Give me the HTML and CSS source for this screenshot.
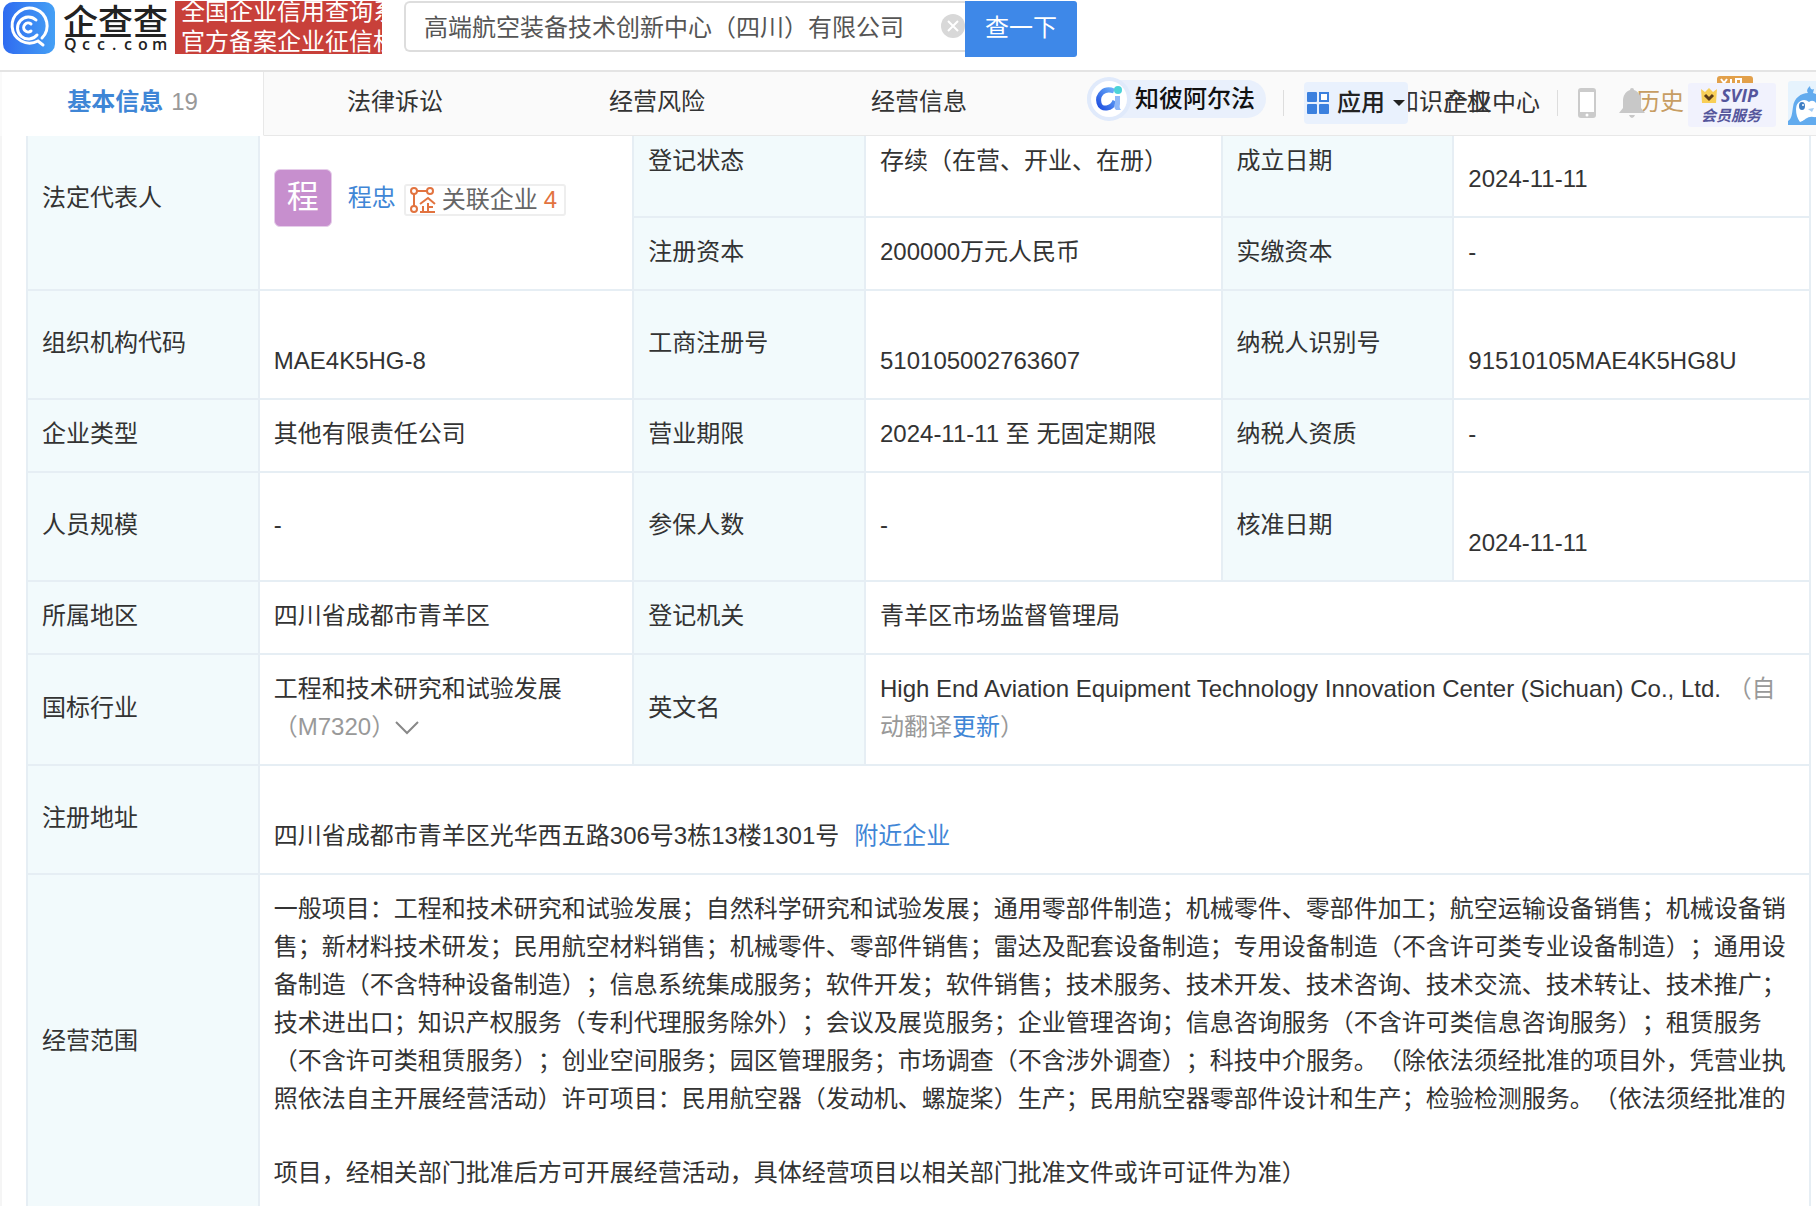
FILE: index.html
```html
<!DOCTYPE html>
<html lang="zh-CN">
<head>
    <meta charset="utf-8">
    <title>高端航空装备技术创新中心（四川）有限公司 - 企查查</title>
    <link rel="stylesheet" href="styles.css">
</head>
<body>
    <header class="header">
        <a class="logo" href="#" aria-label="企查查">
            <svg class="logo-mark" viewBox="0 0 52 52">
                <defs>
                    <linearGradient id="logoBg" x1="0" y1="0" x2="1" y2="0">
                        <stop offset="0" stop-color="#2f6bf0"/>
                        <stop offset="1" stop-color="#45a0f5"/>
                    </linearGradient>
                </defs>
                <rect width="52" height="52" rx="10" fill="url(#logoBg)"/>
                <g fill="none" stroke="#fff" stroke-width="3" stroke-linecap="round">
                    <path d="M40 43L35 39A17.500 17.500 0 1 1 39 36"/>
                    <path d="M34 33A11 11 0 1 1 33 18"/>
                    <path d="M28 29A4.500 4.500 0 1 1 28 22"/>
                </g>
            </svg>
            <svg class="logo-text" viewBox="0 0 106 52">
                <text class="logo-cn" x="0" y="33">企查查</text>
                <text class="logo-en" x="1 19 34 49 61 75 89" y="48">Qcc.com</text>
            </svg>
        </a>
        <div class="slogan">
            <p>全国企业信用查询系统</p>
            <p>官方备案企业征信机构</p>
        </div>
        <form class="search">
            <div class="search-box">
                <input class="search-input" type="text" aria-label="企业名称" value="高端航空装备技术创新中心（四川）有限公司">
                <button class="search-clear" type="button" aria-label="清空">
                    <svg viewBox="0 0 24 24">
                        <circle cx="12" cy="12" r="12" fill="#d8d8d8"/>
                        <path d="M7 7L17 17M17 7L7 17" stroke="#fff" stroke-width="2"/>
                    </svg>
                </button>
            </div>
            <button class="search-btn" type="button">查一下</button>
        </form>
    </header>

    <nav class="nav">
        <a class="tab active" href="#">基本信息<span class="count">19</span></a>
        <a class="tab" href="#">法律诉讼</a>
        <a class="tab" href="#">经营风险</a>
        <a class="tab" href="#">经营信息</a>
        <span class="tab"></span>
        <a class="tab" href="#">知识产权</a>
        <a class="tab history" href="#">历史</a>

        <!-- floats over the tabs -->
        <div class="tools">
            <a class="alpha" href="#">
                <svg viewBox="0 0 44 44">
                    <defs>
                        <linearGradient id="alphaBg" x1="1" y1="0" x2="0" y2="1">
                            <stop offset="0" stop-color="#6fb2fa"/>
                            <stop offset="1" stop-color="#1f4fe0"/>
                        </linearGradient>
                    </defs>
                    <circle cx="22" cy="22" r="22" fill="#e0eafb"/>
                    <circle cx="22" cy="22" r="18" fill="#fff"/>
                    <path d="M27 14C17 10 10 18 12 26C14 34 25 32 28 24" fill="none" stroke="url(#alphaBg)" stroke-width="5"/>
                    <path d="M28 19H33V27Q32 31 34 33H29Q26 30 28 26Z" fill="#8fb8f8"/>
                    <circle cx="31" cy="13" r="4" fill="#4cd3d8"/>
                </svg>
                <span>知彼阿尔法</span>
            </a>
            <i class="divider"></i>
            <button class="apps" type="button">
                <svg class="apps-icon" viewBox="0 0 22 22">
                    <g fill="#3b80de">
                        <rect width="10" height="10" rx="1"/>
                        <rect y="12" width="10" height="10" rx="1"/>
                        <rect x="12" y="12" width="10" height="10" rx="1"/>
                    </g>
                    <rect x="13" y="1" width="8" height="8" fill="#fff" stroke="#3b80de" stroke-width="2"/>
                </svg>
                <span>应用</span>
                <svg class="caret" viewBox="0 0 12 6"><path d="M0 0H12L6 6Z" fill="#222"/></svg>
            </button>
            <a class="center" href="#">企业中心</a>
            <i class="divider"></i>
            <svg class="phone" viewBox="0 0 18 30">
                <rect width="18" height="30" rx="3" fill="#cbcbcb"/>
                <rect x="2" y="4" width="14" height="20" fill="#fff"/>
                <circle cx="9" cy="27" r="1.500" fill="#fff"/>
            </svg>
            <svg class="bell" viewBox="0 0 26 30">
                <path d="M11 2a2 2 0 0 1 4 0C20 4 22 8 22 13V20L26 25H0L4 20V13C4 8 6 4 11 2ZM10 27H16Q15 30 13 30T10 27Z" fill="#c8c8c8"/>
            </svg>
            <a class="svip" href="#">
                <svg viewBox="0 0 88 52" aria-label="SVIP 会员服务">
                    <path d="M29 8V4Q29 1 32 1H62Q65 1 65 4V8Z" fill="#e2a04a"/>
                    <path d="M33 4L36 8L39 4M43 4V8M48 8V4H53V8" fill="none" stroke="#fff" stroke-width="2"/>
                    <rect y="8" width="88" height="44" rx="3" fill="#f1f2fd"/>
                    <path d="M13 14L17 17L21 13L25 17L29 14L28 28H14Z" fill="#f8cf57"/>
                    <path d="M17 20L21 24L25 20" fill="none" stroke="#5a3c1a" stroke-width="3"/>
                    <text class="svip-en" x="33" y="27">SVIP</text>
                    <text class="svip-cn" x="13" y="46">会员服务</text>
                </svg>
            </a>
            <svg class="mascot" viewBox="0 0 28 44">
                <rect width="44" height="44" rx="3" fill="#e6f3fd"/>
                <path d="M0 40C4 38 4 32 5 26C6 17 13 12 20 12C18 9 20 7 22 5C22 8 24 9 26 8L25 12L28 13V44H0Z" fill="#62abee"/>
                <path d="M8 28A8 9 0 0 1 21 21Q25 18 28 22V36Q20 37 12 41Q8 36 8 28Z" fill="#fff"/>
                <ellipse cx="14" cy="25" rx="3" ry="4" fill="#3f7fc4"/>
                <circle cx="15" cy="24" r="1" fill="#fff"/>
                <path d="M20 28L26 27L24 31Z" fill="#a5cdf3"/>
                <path d="M13 44Q20 34 28 38M18 44Q22 39 28 42" fill="none" stroke="#62abee" stroke-width="2"/>
            </svg>
        </div>
    </nav>

    <main class="content">
        <table class="info">
            <colgroup>
                <col class="c-label"><col class="c-first">
                <col class="c-label"><col class="c-value">
                <col class="c-label"><col class="c-value">
            </colgroup>
            <tr>
                <th rowspan="2">法定代表人</th>
                <td rowspan="2">
                    <div class="person">
                        <span class="avatar">程</span>
                        <a href="#">程忠</a>
                        <a class="related" href="#">
                            <svg viewBox="0 0 26 26">
                                <g fill="none" stroke="#e2733f" stroke-width="2">
                                    <circle cx="4" cy="4" r="3"/>
                                    <circle cx="20" cy="4" r="3"/>
                                    <circle cx="4" cy="22" r="3"/>
                                    <path d="M7 4H17M4 7V19M10 17L18 11L25 17M18 16V24M13 19V24M18 20H23M10 25H25"/>
                                </g>
                            </svg>
                            <span>关联企业</span>
                            <b>4</b>
                        </a>
                    </div>
                </td>
                <th>登记状态</th>
                <td>存续（在营、开业、在册）</td>
                <th>成立日期</th>
                <td class="low">2024-11-11</td>
            </tr>
            <tr>
                <th>注册资本</th>
                <td>200000万元人民币</td>
                <th>实缴资本</th>
                <td>-</td>
            </tr>
            <tr>
                <th>组织机构代码</th>
                <td class="low">MAE4K5HG-8</td>
                <th>工商注册号</th>
                <td class="low">510105002763607</td>
                <th>纳税人识别号</th>
                <td class="low">91510105MAE4K5HG8U</td>
            </tr>
            <tr>
                <th>企业类型</th>
                <td>其他有限责任公司</td>
                <th>营业期限</th>
                <td>2024-11-11 至 无固定期限</td>
                <th>纳税人资质</th>
                <td>-</td>
            </tr>
            <tr>
                <th>人员规模</th>
                <td>-</td>
                <th>参保人数</th>
                <td>-</td>
                <th>核准日期</th>
                <td class="low">2024-11-11</td>
            </tr>
            <tr>
                <th>所属地区</th>
                <td>四川省成都市青羊区</td>
                <th>登记机关</th>
                <td colspan="3">青羊区市场监督管理局</td>
            </tr>
            <tr>
                <th>国标行业</th>
                <td>工程和技术研究和试验发展<span class="muted">（M7320）</span><svg class="chevron" viewBox="0 0 24 14"><path d="M1 1L12 12L23 1" fill="none" stroke="#888" stroke-width="2"/></svg></td>
                <th>英文名</th>
                <td colspan="3">High End Aviation Equipment Technology Innovation Center (Sichuan) Co., Ltd. <span class="muted">（自动翻译<a href="#">更新</a>）</span></td>
            </tr>
            <tr>
                <th>注册地址</th>
                <td class="low" colspan="5">四川省成都市青羊区光华西五路306号3栋13楼1301号<a class="nearby" href="#">附近企业</a></td>
            </tr>
            <tr>
                <th>经营范围</th>
                <td colspan="5">一般项目：工程和技术研究和试验发展；自然科学研究和试验发展；通用零部件制造；机械零件、零部件加工；航空运输设备销售；机械设备销售；新材料技术研发；民用航空材料销售；机械零件、零部件销售；雷达及配套设备制造；专用设备制造（不含许可类专业设备制造）；通用设备制造（不含特种设备制造）；信息系统集成服务；软件开发；软件销售；技术服务、技术开发、技术咨询、技术交流、技术转让、技术推广；技术进出口；知识产权服务（专利代理服务除外）；会议及展览服务；企业管理咨询；信息咨询服务（不含许可类信息咨询服务）；租赁服务（不含许可类租赁服务）；创业空间服务；园区管理服务；市场调查（不含涉外调查）；科技中介服务。（除依法须经批准的项目外，凭营业执照依法自主开展经营活动）许可项目：民用航空器（发动机、螺旋桨）生产；民用航空器零部件设计和生产；检验检测服务。（依法须经批准的<span class="last-line">项目，经相关部门批准后方可开展经营活动，具体经营项目以相关部门批准文件或许可证件为准）</span></td>
            </tr>
        </table>
    </main>
</body>
</html>
```

FILE: styles.css
```css
* {
    box-sizing: border-box;
}
body {
    margin: 0;
    font-family: "Liberation Sans", "Noto Sans CJK SC", sans-serif;
    font-size: 24px;
    line-height: 38px;
    color: #333;
    background-color: #fff;
    text-spacing-trim: space-all;
    overflow-x: hidden;
}
a {
    color: #3f86d6;
    text-decoration: none;
}
button, input {
    font: inherit;
    border: 0;
    padding: 0;
}
svg {
    flex: none;
}

/* Header */
.header {
    display: flex;
    align-items: flex-start;
    height: 70px;
    padding: 1px 3px 0;
}
.logo {
    display: flex;
    gap: 8px;
    padding-top: 1px;
}
.logo-mark {
    width: 52px;
    height: 52px;
}
.logo-text {
    width: 106px;
    height: 52px;
}
.logo-cn {
    font-size: 35px;
    font-weight: 500;
    fill: #222;
}
.logo-en {
    font-family: "Open Sans", sans-serif;
    font-size: 16px;
    font-weight: 600;
    fill: #222;
}
.slogan {
    display: flex;
    flex-direction: column;
    justify-content: center;
    flex: none;
    width: 207px;
    height: 53px;
    margin-left: 6px;
    padding: 0 0 2px 6px;
    overflow: hidden;
    white-space: nowrap;
    line-height: 30px;
    color: #fff;
    background-color: #c8403a;
}
.slogan p {
    margin: 0;
}
.search {
    display: flex;
    align-items: flex-start;
    margin-left: 22px;
}
.search-box {
    display: flex;
    align-items: center;
    width: 561px;
    height: 51px;
    padding: 0 0 2px 18px;
    border: 2px solid #ddd;
    border-right: 0;
    border-radius: 6px 0 0 6px;
}
.search-input {
    flex: 1;
    min-width: 0;
    height: 44px;
    color: #555;
    background: none;
}
.search-clear {
    display: flex;
    background: none;
}
.search-clear svg {
    width: 24px;
    height: 24px;
}
.search-btn {
    width: 112px;
    height: 56px;
    padding-bottom: 2px;
    color: #fff;
    background-color: #3e88e8;
    border-radius: 0 3px 3px 0;
}

/* Tabs */
.nav {
    position: relative;
    z-index: 1;
    display: flex;
    height: 66px;
    padding-left: 2px;
    background-color: #fafafa;
    border-top: 2px solid #e4e4e4;
}
.tab {
    display: flex;
    align-items: center;
    justify-content: center;
    flex: none;
    width: 262px;
    padding-bottom: 4px;
    color: #333;
    border-bottom: 1px solid #e8e8e8;
}
.tab.active {
    font-weight: 700;
    color: #3f86d6;
    background-color: #fff;
    border-right: 1px solid #e8e8e8;
    border-bottom-color: #fff;
}
.count {
    margin-left: 8px;
    font-weight: 400;
    color: #999;
}
.tab.history {
    justify-content: flex-start;
    padding-left: 62px;
    color: #c79d63;
}
.tools {
    position: absolute;
    top: 0;
    right: 0;
    display: flex;
    align-items: center;
    height: 62px;
    color: #222;
}
.alpha {
    display: flex;
    align-items: center;
    gap: 4px;
    height: 38px;
    margin-bottom: 8px;
    padding-right: 11px;
    font-weight: 500;
    color: #111;
    background-color: #e9f0fc;
    border-radius: 20px;
}
.alpha svg {
    width: 44px;
    height: 44px;
}
.divider {
    width: 1px;
    height: 26px;
    margin: 0 20px 0 17px;
    background-color: #ddd;
}
.apps {
    display: flex;
    align-items: center;
    gap: 8px;
    height: 42px;
    padding: 0 3px;
    font-weight: 500;
    color: #222;
    background-color: #e9f1fd;
    border-radius: 4px;
}
.apps-icon {
    width: 22px;
    height: 22px;
}
.caret {
    width: 12px;
    height: 6px;
}
.center {
    margin-left: 36px;
    color: #333;
}
.phone {
    width: 18px;
    height: 30px;
}
.bell {
    width: 26px;
    height: 30px;
    margin: 0 43px 0 23px;
}
.svip {
    display: flex;
    margin-bottom: 4px;
}
.svip svg {
    width: 88px;
    height: 52px;
}
.svip text {
    font-weight: 700;
    font-style: italic;
    fill: #55569c;
}
.svip-en {
    font-family: "Open Sans", sans-serif;
    font-size: 18px;
}
.svip-cn {
    font-size: 15px;
}
.mascot {
    width: 28px;
    height: 44px;
    margin-left: 12px;
}

/* Company info, scrolled a little under the tabs */
.content {
    margin-top: -29px;
    padding: 0 5px 0 24px;
    border-left: 2px solid #f5f5f5;
}
.info {
    width: 100%;
    table-layout: fixed;
    border-collapse: collapse;
}
.c-label {
    width: 13%;
}
.c-first {
    width: 21%;
}
.c-value {
    width: 20%;
}
.info th,
.info td {
    padding: 15px 15px 18px 14px;
    text-align: left;
    font-weight: 400;
    border: 2px solid #e6eef4;
}
.info th {
    background-color: #f2fafc;
}
.info td.low {
    padding-top: 51px;
}
.person {
    display: flex;
    align-items: center;
}
.avatar {
    width: 58px;
    height: 58px;
    margin-right: 16px;
    font-size: 32px;
    line-height: 54px;
    text-align: center;
    color: #fff;
    background-color: #c78fce;
    border: 1px solid #e6cdea;
    border-radius: 6px;
}
.related {
    display: flex;
    align-items: center;
    gap: 6px;
    height: 32px;
    margin: 4px 0 0 8px;
    padding: 0 7px 0 4px;
    color: #666;
    border: 2px solid #eee;
    border-radius: 3px;
}
.related svg {
    width: 26px;
    height: 26px;
}
.related b {
    font-weight: 400;
    color: #e2733f;
}
.muted {
    color: #999;
}
.chevron {
    width: 24px;
    height: 14px;
}
.nearby {
    margin-left: 15px;
}
.last-line {
    display: block;
    padding-top: 36px;
}
```
